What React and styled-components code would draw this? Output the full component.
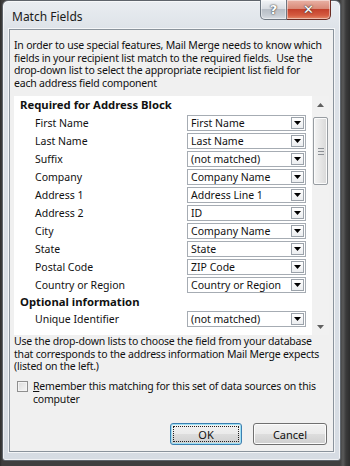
import React from 'react';
import styled, { createGlobalStyle } from 'styled-components';

const GlobalStyle = createGlobalStyle`
  html, body {
    margin: 0;
    padding: 0;
    background: #3b3b3b;
  }
  body {
    font-family: "Noto Sans", "Open Sans", sans-serif;
    font-size: 10.5px;
    color: #111;
  }
`;

const Screen = styled.div`
  width: 350px;
  height: 466px;
  overflow: hidden;
  background: linear-gradient(90deg, #2e2e2e 0, #3f3f3f 2px, #3f3f3f 340px, #5a5a5a 343px, #3a3a3a 346px, #2c2c2c 350px);
  display: flex;
  padding-left: 2px;
  box-sizing: border-box;
`;

const Window = styled.div`
  width: 339px;
  height: 461px;
  box-sizing: border-box;
  border: 1px solid #5e646b;
  border-radius: 6px 6px 3px 3px;
  background: linear-gradient(180deg, #e9edf1 0, #dde2e8 30px, #d6dce3 100%);
  box-shadow: inset 0 0 0 1px rgba(255, 255, 255, 0.6);
  display: flex;
  flex-direction: column;
`;

const TitleBar = styled.div`
  height: 28px;
  display: flex;
  justify-content: space-between;
  align-items: flex-start;
  flex-shrink: 0;
`;

const Title = styled.div`
  padding: 7px 0 0 9px;
  font-size: 12px;
  color: #1a1a1a;
`;

const Caption = styled.div`
  display: flex;
  margin-right: 9px;
  margin-top: -1px;
`;

const CaptionButton = styled.div`
  width: ${(p) => p.$w}px;
  height: 20px;
  box-sizing: border-box;
  border: 1px solid ${(p) => (p.$close ? '#6a2b22' : '#6d7680')};
  border-top: none;
  border-left-width: ${(p) => (p.$close ? 0 : 1)}px;
  border-radius: ${(p) => (p.$close ? '0 0 5px 0' : '0 0 0 5px')};
  background: ${(p) =>
    p.$close
      ? 'linear-gradient(180deg, #e9b2a6 0, #d98a78 45%, #c4412c 50%, #d45a40 80%, #e38a6a 100%)'
      : 'linear-gradient(180deg, #f2f4f6 0, #d9dde2 45%, #b8bec6 50%, #c6ccd3 80%, #d8dde2 100%)'};
  box-shadow: inset 0 0 0 1px rgba(255, 255, 255, 0.45);
  display: flex;
  align-items: center;
  justify-content: center;
  color: #fff;
  font-family: "DejaVu Sans", sans-serif;
  font-weight: bold;
  font-size: 13px;
  text-shadow: 0 0 1px #333, 0 0 2px #444;
`;

const Client = styled.div`
  flex: 1;
  margin: 0 6px 8px 6px;
  border: 1px solid #8a939c;
  box-shadow: 0 0 0 1px rgba(255, 255, 255, 0.7);
  background: #f0f0f0;
  display: flex;
  flex-direction: column;
  padding: 0 4px 6px 4px;
`;

const Paragraph = styled.p`
  margin: ${(p) => p.$margin || '0'};
  line-height: ${(p) => p.$lh || 12.5}px;
  letter-spacing: -0.2px;
`;

const Line = styled.span`
  display: block;
  white-space: nowrap;
`;

const List = styled.div`
  height: 239px;
  margin-top: 7px;
  display: flex;
  overflow: hidden;
  flex-shrink: 0;
`;

const ListBody = styled.div`
  flex: 1;
  background: #fff;
  overflow: hidden;
`;

const GroupHeader = styled.div`
  height: ${(p) => p.$h}px;
  line-height: ${(p) => p.$h}px;
  padding-left: 6px;
  font-weight: bold;
  font-size: 11.3px;
`;

const Row = styled.div`
  height: 18px;
  display: flex;
  align-items: center;
  padding-left: 21px;
`;

const Label = styled.div`
  width: 152px;
`;

const Combo = styled.div`
  width: 119px;
  height: 16px;
  box-sizing: border-box;
  border: 1px solid #a6acb3;
  background: #fff;
  display: flex;
  align-items: center;
  padding: 1px;
`;

const ComboText = styled.div`
  flex: 1;
  padding-left: 2px;
  white-space: nowrap;
  overflow: hidden;
`;

const DropButton = styled.div`
  width: 13px;
  height: 12px;
  box-sizing: border-box;
  border: 1px solid #9ba2aa;
  background: linear-gradient(180deg, #ffffff 0, #eceef0 100%);
  display: flex;
  align-items: center;
  justify-content: center;
`;

const ScrollBar = styled.div`
  width: 17px;
  background: #f1f1f1;
  display: flex;
  flex-direction: column;
  align-items: center;
`;

const Arrow = styled.div`
  height: 17px;
  display: flex;
  align-items: center;
  justify-content: center;
`;

const Thumb = styled.div`
  width: 15px;
  height: 68px;
  margin-top: 4px;
  box-sizing: border-box;
  border: 1px solid #979ca1;
  border-radius: 2px;
  background: linear-gradient(90deg, #f4f4f4 0, #e6e6e6 50%, #d8d8d8 100%);
  box-shadow: inset 0 0 0 1px #fbfbfb;
  display: flex;
  flex-direction: column;
  align-items: center;
  justify-content: center;
  gap: 2px;
`;

const Grip = styled.div`
  width: 6px;
  height: 1px;
  background: #8c9095;
`;

const Track = styled.div`
  flex: 1;
`;

const CheckRow = styled.div`
  display: flex;
  align-items: flex-start;
  margin-top: 7px;
  padding-left: 3px;
`;

const Checkbox = styled.div`
  width: 11px;
  height: 11px;
  margin-top: 1px;
  margin-right: 5px;
  flex-shrink: 0;
  box-sizing: border-box;
  border: 1px solid #8f8f8f;
  background: linear-gradient(135deg, #dcdcdc 0, #f6f6f6 100%);
  box-shadow: inset 0 0 0 1px #f4f4f4;
`;

const ButtonRow = styled.div`
  margin-top: auto;
  display: flex;
  justify-content: flex-end;
  gap: 11px;
  padding-right: 2px;
`;

const Button = styled.button`
  width: ${(p) => p.$w}px;
  height: 22px;
  box-sizing: border-box;
  border: 1px solid ${(p) => (p.$focus ? '#3c7fb1' : '#707070')};
  border-radius: 3px;
  background: linear-gradient(180deg, #f2f2f2 0, #ebebeb 48%, #dddddd 52%, #cfcfcf 100%);
  box-shadow: inset 0 0 0 1px ${(p) => (p.$focus ? '#9fe0f4' : '#fcfcfc')};
  font-family: inherit;
  font-size: 11px;
  color: #111;
  padding: 2px;
  display: flex;
`;

const Focus = styled.span`
  flex: 1;
  display: flex;
  align-items: center;
  justify-content: center;
  border: 1px dotted ${(p) => (p.$on ? '#222' : 'transparent')};
`;

const Underline = styled.span`
  text-decoration: underline;
`;

const required = [
  ['First Name', 'First Name'],
  ['Last Name', 'Last Name'],
  ['Suffix', '(not matched)'],
  ['Company', 'Company Name'],
  ['Address 1', 'Address Line 1'],
  ['Address 2', 'ID'],
  ['City', 'Company Name'],
  ['State', 'State'],
  ['Postal Code', 'ZIP Code'],
  ['Country or Region', 'Country or Region'],
];

function DownArrow({ color = '#000', w = 7, h = 4 }) {
  return (
    <svg width={w} height={h} viewBox={`0 0 ${w} ${h}`}>
      <polygon points={`0,0 ${w},0 ${w / 2},${h}`} fill={color} />
    </svg>
  );
}

function UpArrow() {
  return (
    <svg width="7" height="4" viewBox="0 0 7 4">
      <polygon points="0,4 7,4 3.5,0" fill="#606060" />
    </svg>
  );
}

function FieldRow({ label, value }) {
  return (
    <Row>
      <Label>{label}</Label>
      <Combo>
        <ComboText>{value}</ComboText>
        <DropButton>
          <DownArrow />
        </DropButton>
      </Combo>
    </Row>
  );
}

export default function App() {
  return (
    <>
      <GlobalStyle />
      <Screen>
        <Window>
          <TitleBar>
            <Title>Match Fields</Title>
            <Caption>
              <CaptionButton $w={27}>?</CaptionButton>
              <CaptionButton $w={44} $close>✕</CaptionButton>
            </Caption>
          </TitleBar>
          <Client>
            <Paragraph $margin="9px 0 0 0">
              <Line>In order to use special features, Mail Merge needs to know which</Line>
              <Line>fields in your recipient list match to the required fields.&nbsp; Use the</Line>
              <Line>drop-down list to select the appropriate recipient list field for</Line>
              <Line>each address field component</Line>
            </Paragraph>
            <List>
              <ListBody>
                <GroupHeader $h={18}>Required for Address Block</GroupHeader>
                {required.map(([l, v]) => (
                  <FieldRow key={l} label={l} value={v} />
                ))}
                <GroupHeader $h={16}>Optional information</GroupHeader>
                <FieldRow label="Unique Identifier" value="(not matched)" />
              </ListBody>
              <ScrollBar>
                <Arrow>
                  <UpArrow />
                </Arrow>
                <Thumb>
                  <Grip />
                  <Grip />
                  <Grip />
                </Thumb>
                <Track />
                <Arrow>
                  <DownArrow color="#606060" />
                </Arrow>
              </ScrollBar>
            </List>
            <Paragraph $lh={12.5}>
              <Line>Use the drop-down lists to choose the field from your database</Line>
              <Line>that corresponds to the address information Mail Merge expects</Line>
              <Line>(listed on the left.)</Line>
            </Paragraph>
            <CheckRow>
              <Checkbox />
              <Paragraph $lh={13.5}>
                <Line>
                  <Underline>R</Underline>emember this matching for this set of data sources on this
                </Line>
                <Line>computer</Line>
              </Paragraph>
            </CheckRow>
            <ButtonRow>
              <Button $w={72} $focus>
                <Focus $on>OK</Focus>
              </Button>
              <Button $w={74}>
                <Focus>Cancel</Focus>
              </Button>
            </ButtonRow>
          </Client>
        </Window>
      </Screen>
    </>
  );
}
